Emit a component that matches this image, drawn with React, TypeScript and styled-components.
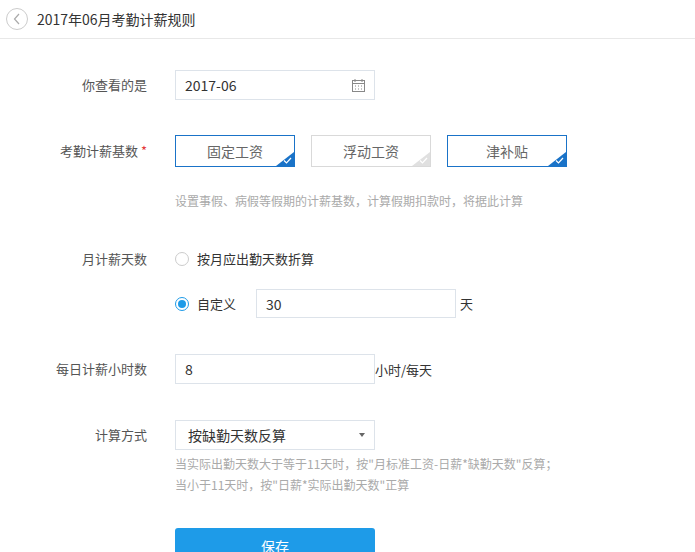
import styled, { createGlobalStyle } from 'styled-components'

const Global = createGlobalStyle`
  body {
    margin: 0;
    font-family: "Noto Sans CJK SC", "Liberation Sans", sans-serif;
    background: #fff;
    color: #333;
  }
`

const Header = styled.div`
  height: 38px;
  border-bottom: 1px solid #e8e8e8;
  display: flex;
  align-items: center;
  padding-left: 6px;
  gap: 9px;
  font-size: 14px;
  color: #333;
`

const Back = styled.div`
  width: 22px;
  height: 22px;
  border: 1px solid #ccc;
  border-radius: 50%;
  display: flex;
  align-items: center;
  justify-content: center;
  box-sizing: border-box;
`

const Form = styled.div`
  padding-top: 31px;
`

const Row = styled.div<{ $top: number }>`
  display: flex;
  margin-top: ${(p) => p.$top}px;
`

const Label = styled.div<{ $h: number }>`
  width: 147px;
  flex: none;
  text-align: right;
  font-size: 13px;
  color: #555;
  line-height: ${(p) => p.$h}px;
  margin-right: 28px;
`

const Star = styled.span`
  color: #e4393c;
  margin-left: 3px;
`

const Body = styled.div`
  display: flex;
  flex-direction: column;
`

const Inline = styled.div`
  display: flex;
  align-items: center;
`

const Input = styled.div<{ $w: number; $h?: number }>`
  width: ${(p) => p.$w}px;
  height: ${(p) => p.$h ?? 30}px;
  box-sizing: border-box;
  border: 1px solid #dde3ea;
  display: flex;
  align-items: center;
  justify-content: space-between;
  padding: 0 9px;
  font-size: 14px;
  color: #333;
`

const Cards = styled.div`
  display: flex;
  gap: 16px;
`

const Card = styled.div<{ $on: boolean }>`
  position: relative;
  width: 120px;
  height: 32px;
  box-sizing: border-box;
  border: 1px solid ${(p) => (p.$on ? '#1a73c8' : '#d9d9d9')};
  display: flex;
  align-items: center;
  justify-content: center;
  font-size: 14px;
  color: #666;
  overflow: hidden;
`

const Corner = styled.div<{ $on: boolean }>`
  position: absolute;
  right: 0;
  bottom: 0;
  width: 0;
  height: 0;
  border-left: 18px solid transparent;
  border-bottom: 14px solid ${(p) => (p.$on ? '#1a73c8' : '#e0e0e0')};
`

const Tick = styled.svg`
  position: absolute;
  right: 2px;
  bottom: 2px;
`

const Hint = styled.div<{ $top: number }>`
  margin-top: ${(p) => p.$top}px;
  font-size: 12px;
  color: #aaa;
  line-height: 21px;
`

const Radio = styled.div<{ $on: boolean }>`
  width: 14px;
  height: 14px;
  border-radius: 50%;
  box-sizing: border-box;
  border: 1px solid ${(p) => (p.$on ? '#1e9be8' : '#ccc')};
  display: flex;
  align-items: center;
  justify-content: center;
  margin-right: 8px;
  &::after {
    content: '';
    width: 8px;
    height: 8px;
    border-radius: 50%;
    background: ${(p) => (p.$on ? '#1e9be8' : 'transparent')};
  }
`

const RadioText = styled.span`
  font-size: 13px;
  color: #333;
  line-height: 20px;
`

const Unit = styled.span`
  font-size: 13px;
  color: #333;
  margin-left: 4px;
`

const Caret = styled.span`
  width: 0;
  height: 0;
  border-left: 3.5px solid transparent;
  border-right: 3.5px solid transparent;
  border-top: 4px solid #666;
`

const SaveButton = styled.button`
  margin: 33px 0 0 175px;
  width: 200px;
  height: 36px;
  border: none;
  border-radius: 3px;
  background: #1e9be8;
  color: #fff;
  font-size: 14px;
  font-family: inherit;
`

const Check = ({ on }: { on: boolean }) => (
  <>
    <Corner $on={on} />
    <Tick width="9" height="7" viewBox="0 0 9 7">
      <path d="M1 3.5 L3.5 6 L8 1" stroke="#fff" strokeWidth="1.2" fill="none" />
    </Tick>
  </>
)

export default function App() {
  return (
    <>
      <Global />
      <Header>
        <Back>
          <svg width="8" height="12" viewBox="0 0 8 12">
            <path d="M6 1 L1.5 6 L6 11" stroke="#aaa" strokeWidth="1.2" fill="none" />
          </svg>
        </Back>
        2017年06月考勤计薪规则
      </Header>
      <Form>
        <Row $top={0}>
          <Label $h={30}>你查看的是</Label>
          <Input $w={200}>
            2017-06
            <svg width="13" height="13" viewBox="0 0 13 13">
              <rect x="0.5" y="1.5" width="12" height="11" fill="none" stroke="#888" />
              <path d="M3 0v3M10 0v3M0.5 4.5h12" stroke="#888" />
              <path d="M3 7h1M6 7h1M9 7h1M3 10h1M6 10h1M9 10h1" stroke="#888" />
            </svg>
          </Input>
        </Row>
        <Row $top={35}>
          <Label $h={32}>
            考勤计薪基数<Star>*</Star>
          </Label>
          <Body>
            <Cards>
              <Card $on>固定工资<Check on /></Card>
              <Card $on={false}>浮动工资<Check on={false} /></Card>
              <Card $on>津补贴<Check on /></Card>
            </Cards>
            <Hint $top={23}>设置事假、病假等假期的计薪基数，计算假期扣款时，将据此计算</Hint>
          </Body>
        </Row>
        <Row $top={38}>
          <Label $h={20}>月计薪天数</Label>
          <Body>
            <Inline>
              <Radio $on={false} />
              <RadioText>按月应出勤天数折算</RadioText>
            </Inline>
            <Inline style={{ marginTop: 20 }}>
              <Radio $on />
              <RadioText>自定义</RadioText>
              <Input $w={200} $h={29} style={{ marginLeft: 20 }}>30</Input>
              <Unit>天</Unit>
            </Inline>
          </Body>
        </Row>
        <Row $top={36}>
          <Label $h={30}>每日计薪小时数</Label>
          <Inline>
            <Input $w={200}>8</Input>
            <Unit style={{ marginLeft: 0 }}>小时/每天</Unit>
          </Inline>
        </Row>
        <Row $top={36}>
          <Label $h={30}>计算方式</Label>
          <Body>
            <Input $w={200} style={{ paddingLeft: 12 }}>
              按缺勤天数反算
              <Caret />
            </Input>
            <Hint $top={3}>
              当实际出勤天数大于等于11天时，按"月标准工资-日薪*缺勤天数"反算；
              <br />
              当小于11天时，按"日薪*实际出勤天数"正算
            </Hint>
          </Body>
        </Row>
        <SaveButton>保存</SaveButton>
      </Form>
    </>
  )
}
